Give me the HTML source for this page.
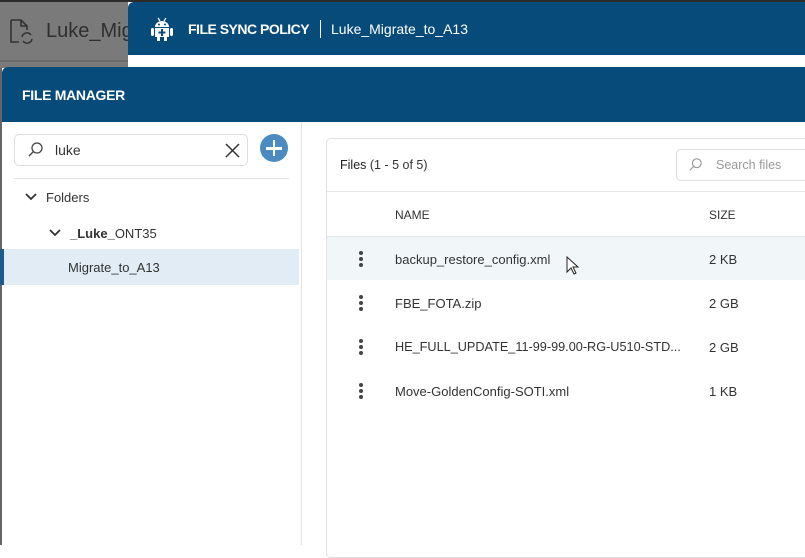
<!DOCTYPE html>
<html><head><style>
*{box-sizing:border-box;margin:0;padding:0}
body{width:805px;height:545px;overflow:hidden;background:#fff;font-family:"Liberation Sans",sans-serif;position:relative;color:#333}
.abs{position:absolute}
</style></head><body>
<div class="abs" style="left:0;top:0;width:805px;height:2px;background:#2b2b2b"></div>
<div class="abs" style="left:0;top:2px;width:128px;height:60px;background:#7a7a7a"></div>
<div class="abs" style="left:0;top:60px;width:128px;height:2px;background:#6a6a6a"></div>
<div class="abs" style="left:0;top:62px;width:128px;height:6px;background:#7a7a7a"></div>
<svg class="abs" style="left:8px;top:18px" width="26" height="28" viewBox="0 0 26 28"><path d="M3 2h10l6 6v4M3 2v22h8" fill="none" stroke="#333" stroke-width="1.6"/><path d="M13 2v6h6" fill="none" stroke="#333" stroke-width="1.6"/><path d="M14 19a5 5 0 0 1 9-2M24 21a5 5 0 0 1-9 2" fill="none" stroke="#333" stroke-width="1.5"/></svg>
<div class="abs" style="left:46px;top:20px;font-size:20px;color:#2f2f2f">Luke_Migr</div>
<div class="abs" style="left:128px;top:2px;width:677px;height:53px;background:#074b7b;border-top-left-radius:6px"></div>
<svg class="abs" style="left:150px;top:16px" width="24" height="26" viewBox="0 0 24 26"><path d="M8 2l2 3M16 2l-2 3" stroke="#fff" stroke-width="1.2"/><path d="M5 11a7 6 0 0 1 14 0z" fill="#fff"/><rect x="1" y="12" width="3" height="8" rx="1.5" fill="#fff"/><rect x="20" y="12" width="3" height="8" rx="1.5" fill="#fff"/><rect x="5" y="12" width="14" height="9" fill="#fff"/><rect x="7" y="20" width="3" height="5" fill="#fff"/><rect x="14" y="20" width="3" height="5" fill="#fff"/><path d="M12 13v7M8.5 16.5h7" stroke="#074b7b" stroke-width="2"/><circle cx="9" cy="8.5" r="1" fill="#074b7b"/><circle cx="15" cy="8.5" r="1" fill="#074b7b"/></svg>
<div class="abs" style="left:188px;top:21px;font-size:14px;font-weight:bold;color:#fff;letter-spacing:-0.5px">FILE SYNC POLICY</div>
<div class="abs" style="left:320px;top:20px;width:1px;height:18px;background:#fff"></div>
<div class="abs" style="left:331px;top:21px;font-size:14px;color:#fff">Luke_Migrate_to_A13</div>
<div class="abs" style="left:0;top:68px;width:2px;height:477px;background:#666"></div>
<div class="abs" style="left:2px;top:67px;width:803px;height:55px;background:#074b7b;border-top-left-radius:6px"></div>
<div class="abs" style="left:22px;top:87px;font-size:14px;font-weight:bold;color:#fff;letter-spacing:-0.3px">FILE MANAGER</div>
<div class="abs" style="left:301px;top:122px;width:1px;height:423px;background:#e2e2e2"></div>
<div class="abs" style="left:14px;top:134px;width:234px;height:32px;border:1px solid #ddd;border-radius:5px"></div>
<svg class="abs" style="left:27px;top:141px" width="17" height="17" viewBox="0 0 17 17"><circle cx="10" cy="7" r="5" fill="none" stroke="#444" stroke-width="1.3"/><path d="M6.5 10.5L2 15" stroke="#444" stroke-width="1.3"/></svg>
<div class="abs" style="left:55px;top:142px;font-size:14px;color:#333">luke</div>
<svg class="abs" style="left:225px;top:143px" width="15" height="15" viewBox="0 0 15 15"><path d="M1 1l13 13M14 1L1 14" stroke="#333" stroke-width="1.5"/></svg>
<div class="abs" style="left:260px;top:134px;width:28px;height:28px;border-radius:50%;background:#4a8bc2"></div>
<div class="abs" style="left:266px;top:147px;width:16px;height:2.5px;background:#fff"></div>
<div class="abs" style="left:272.7px;top:140px;width:2.5px;height:16px;background:#fff"></div>
<div class="abs" style="left:14px;top:178px;width:275px;height:1px;background:#e2e2e2"></div>
<svg class="abs" style="left:25px;top:192px" width="12" height="10" viewBox="0 0 12 10"><path d="M1 2l5 5 5-5" fill="none" stroke="#333" stroke-width="1.8"/></svg>
<div class="abs" style="left:46px;top:190px;font-size:13px">Folders</div>
<svg class="abs" style="left:49px;top:228px" width="12" height="10" viewBox="0 0 12 10"><path d="M1 2l5 5 5-5" fill="none" stroke="#333" stroke-width="1.8"/></svg>
<div class="abs" style="left:70px;top:226px;font-size:13px"><b>_Luke_</b>ONT35</div>
<div class="abs" style="left:2px;top:249px;width:297px;height:36px;background:#e1ecf4"></div>
<div class="abs" style="left:0;top:249px;width:4px;height:36px;background:#1e5a8c"></div>
<div class="abs" style="left:68px;top:260px;font-size:13px;color:#333">Migrate_to_A13</div>
<div class="abs" style="left:326px;top:138px;width:490px;height:420px;border:1px solid #e2e2e2;border-radius:5px"></div>
<div class="abs" style="left:340px;top:158px;font-size:12.5px"><b style="font-weight:normal;color:#222">Files</b> (1 - 5 of 5)</div>
<div class="abs" style="left:676px;top:149px;width:140px;height:32px;border:1px solid #ddd;border-radius:5px"></div>
<svg class="abs" style="left:688px;top:157px" width="15" height="15" viewBox="0 0 17 17"><circle cx="10" cy="7" r="5" fill="none" stroke="#999" stroke-width="1.3"/><path d="M6.5 10.5L2 15" stroke="#999" stroke-width="1.3"/></svg>
<div class="abs" style="left:716px;top:158px;font-size:12.5px;color:#999">Search files</div>
<div class="abs" style="left:327px;top:191px;width:478px;height:1px;background:#e6e6e6"></div>
<div class="abs" style="left:395px;top:208px;font-size:12px;color:#333">NAME</div>
<div class="abs" style="left:709px;top:208px;font-size:12px;color:#333">SIZE</div>
<div class="abs" style="left:327px;top:236px;width:478px;height:1px;background:#e6e6e6"></div>
<div class="abs" style="left:327px;top:237px;width:478px;height:43px;background:#f1f6f9"></div>
<div class="abs" style="left:395px;top:252px;font-size:13px">backup_restore_config.xml</div>
<div class="abs" style="left:709px;top:252px;font-size:13px">2 KB</div>
<svg class="abs" style="left:566px;top:256px" width="14" height="20" viewBox="0 0 14 20"><path d="M1 1v15l4-4 3 6 2-1-3-6h5z" fill="#fff" stroke="#222" stroke-width="1"/></svg>
<div class="abs" style="left:395px;top:296px;font-size:13px">FBE_FOTA.zip</div>
<div class="abs" style="left:709px;top:296px;font-size:13px">2 GB</div>
<div class="abs" style="left:395px;top:340px;font-size:12.7px">HE_FULL_UPDATE_11-99-99.00-RG-U510-STD...</div>
<div class="abs" style="left:709px;top:340px;font-size:13px">2 GB</div>
<div class="abs" style="left:395px;top:384px;font-size:13px">Move-GoldenConfig-SOTI.xml</div>
<div class="abs" style="left:709px;top:384px;font-size:13px">1 KB</div>
<svg class="abs" style="left:358px;top:250px" width="6" height="170" viewBox="0 0 6 170">
<g fill="#444"><circle cx="3" cy="3" r="2"/><circle cx="3" cy="9" r="2"/><circle cx="3" cy="15" r="2"/>
<circle cx="3" cy="47" r="2"/><circle cx="3" cy="53" r="2"/><circle cx="3" cy="59" r="2"/>
<circle cx="3" cy="91" r="2"/><circle cx="3" cy="97" r="2"/><circle cx="3" cy="103" r="2"/>
<circle cx="3" cy="135" r="2"/><circle cx="3" cy="141" r="2"/><circle cx="3" cy="147" r="2"/></g></svg>
</body></html>
